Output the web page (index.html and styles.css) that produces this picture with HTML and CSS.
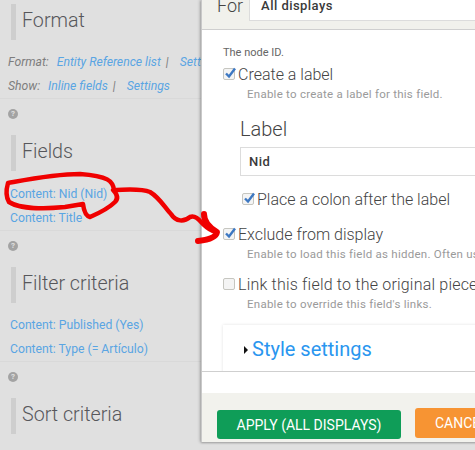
FILE: index.html
```html
<!DOCTYPE html>
<html lang="en">
<head>
<meta charset="utf-8">
<title>Field settings</title>
<link rel="stylesheet" href="styles.css">
</head>
<body>
<main class="sidebar">
  <section class="block first">
    <h2 class="title">Format</h2>
    <p class="meta"><em>Format:</em><a>Entity Reference list</a><em class="sep">|</em><a>Settings</a></p>
    <p class="meta"><em>Show:</em><a>Inline fields</a><em class="sep">|</em><a>Settings</a></p>
  </section>
  <section class="block">
    <span class="help">?</span>
    <h2 class="title">Fields</h2>
    <p class="item"><a>Content: Nid (Nid)</a></p>
    <p class="item"><a>Content: Title</a></p>
  </section>
  <section class="block">
    <span class="help">?</span>
    <h2 class="title">Filter criteria</h2>
    <p class="item"><a>Content: Published (Yes)</a></p>
    <p class="item"><a>Content: Type (= Artículo)</a></p>
  </section>
  <section class="block">
    <span class="help">?</span>
    <h2 class="title">Sort criteria</h2>
  </section>
</main>

<aside class="modal">
  <header class="modal-head">
    <span class="for">For</span>
    <div class="select">All displays</div>
  </header>
  <div class="modal-body">
    <p class="desc">The node ID.</p>
    <label class="check create"><span class="box on"><svg viewBox="0 0 12 12"><path d="M2 6.5 5 9.5 11 1.5" /></svg></span>Create a label</label>
    <p class="hint">Enable to create a label for this field.</p>
    <div class="nested">
      <h3 class="label-head">Label</h3>
      <div class="input">Nid</div>
      <label class="check"><span class="box on"><svg viewBox="0 0 12 12"><path d="M2 6.5 5 9.5 11 1.5" /></svg></span>Place a colon after the label</label>
    </div>
    <label class="check exclude"><span class="box on"><svg viewBox="0 0 12 12"><path d="M2 6.5 5 9.5 11 1.5" /></svg></span>Exclude from display</label>
    <p class="hint">Enable to load this field as hidden. Often used to group fields.</p>
    <label class="check link"><span class="box"></span>Link this field to the original piece of content</label>
    <p class="hint">Enable to override this field's links.</p>
    <div class="fieldset"><span class="tri"></span><span class="legend">Style settings</span></div>
  </div>
  <footer class="modal-foot">
    <button class="btn apply">APPLY (ALL DISPLAYS)</button>
    <button class="btn cancel">CANCEL</button>
  </footer>
</aside>

<svg class="scribble" viewBox="0 0 475 450" width="475" height="450">
  <path class="s4" d="M114 190C113 181 108 176 80 174C55 174 30 179 8 183C6 190 6 197 9 202C20 209 45 209 65 207L83 204C84 212 86 216 90 217C97 214 108 209 115 202C119 198 117 194 113 190C125 190 140 188 150 192C160 198 165 208 171 214C176 222 184 222 190 217C196 215 200 221 204 225C208 229 212 231 216 232" />
  <path class="s6" d="M204 214C204 222 210 228 217 232C216 238 208 240 198 241" />
</svg>
</body>
</html>
```
FILE: styles.css
```css
* { box-sizing: border-box; }
html, body { margin: 0; padding: 0; }
body {
  width: 475px;
  height: 450px;
  overflow: hidden;
  position: relative;
  background: #e0e0e0;
  font-family: Roboto, "Liberation Sans", sans-serif;
  color: #5f5f5f;
}
p, h2, h3 { margin: 0; }
a { color: #5aa5e3; }

.sidebar { width: 201px; height: 450px; overflow: hidden; }
.block {
  height: 131.5px;
  padding-top: 7px;
  border-bottom: 1px solid #d9d9d9;
  white-space: nowrap;
}
.block.first { height: 99px; padding-top: 4px; }
.block:last-child { border-bottom: 0; }

.help {
  display: block;
  width: 10px;
  height: 10px;
  margin: 3px 0 16px 8px;
  border-radius: 50%;
  background: #a3a3a3;
  color: #e0e0e0;
  font-size: 8px;
  font-weight: 700;
  line-height: 10px;
  text-align: center;
}

.title {
  margin-left: 11px;
  height: 36px;
  padding-left: 6px;
  border-left: 5px solid #cecece;
  font-size: 19.7px;
  font-weight: 300;
  line-height: 34px;
  color: #57575b;
}
.meta {
  margin: 0 0 0 8px;
  font-size: 12.2px;
  line-height: 24px;
  color: #7d7d7d;
}
.meta:first-of-type { margin-top: 10px; }
.meta em { font-style: italic; }
.meta a { font-style: italic; margin-left: 8px; }
.meta .sep { margin-left: 5px; margin-right: 3px; }
.item { margin-left: 10px; font-size: 12.2px; line-height: 24px; }
.title + .item { margin-top: 10.5px; }

.modal {
  position: absolute;
  top: 0;
  left: 201px;
  width: 290px;
  height: 442px;
  background: #fff;
  border-left: 1px solid #c9c9c9;
  box-shadow: -1px 0 3px rgba(0, 0, 0, .25), 0 1px 2px rgba(0, 0, 0, .2);
  display: flex;
  flex-direction: column;
}
.modal-head {
  height: 30px;
  flex: none;
  display: flex;
  gap: 6px;
  padding-left: 15px;
  background: #f1f1ec;
  border-bottom: 1px solid #cfcfcf;
  overflow: hidden;
}
.for { font-size: 18px; font-weight: 300; line-height: 12px; color: #444; }
.select {
  width: 260px;
  height: 21px;
  background: #fff;
  border: 1px solid #dcdcdc;
  border-top: 0;
  padding-left: 11px;
  font-size: 13px;
  font-weight: 500;
  line-height: 12px;
  letter-spacing: .45px;
  color: #3a3a3a;
}
.modal-body {
  flex: 1;
  min-height: 0;
  padding: 16px 0 0 21px;
  border-bottom: 1px solid #cfcfcf;
  overflow: hidden;
  margin-bottom: 21px;
  white-space: nowrap;
}
.desc { font-size: 11px; line-height: 14px; color: #666; }
.check {
  display: flex;
  align-items: flex-start;
  gap: 3px;
  height: 20px;
  font-size: 16px;
  font-weight: 300;
  line-height: 20px;
  color: #444;
}
.box {
  flex: none;
  width: 12px;
  height: 12px;
  margin-top: 3px;
  background: #f4f4f4;
  border: 1px solid #c6c6c0;
  border-radius: 2px;
  position: relative;
}
.box svg { position: absolute; left: 0; top: -2px; width: 12px; height: 12px; fill: none; stroke: #3d78c2; stroke-width: 2.4; }
.hint { margin: 2px 0 0 24px; font-size: 11.5px; line-height: 14px; letter-spacing: .25px; color: #9a9a9a; }
.create { margin-top: 5px; }
.nested { padding-left: 17px; }
.label-head { margin-top: 15px; font-size: 20px; font-weight: 300; line-height: 26px; color: #444; }
.input {
  width: 240px;
  height: 29px;
  margin-top: 5px;
  padding-left: 8px;
  background: #fff;
  border: 1px solid #dcdcdc;
  font-size: 13px;
  font-weight: 500;
  line-height: 27px;
  letter-spacing: .45px;
  color: #3a3a3a;
}
.nested .check { margin: 14px 0 0 2px; }
.exclude { margin-top: 15px; }
.link { margin-top: 14px; letter-spacing: .2px; }
.fieldset {
  margin-top: 14px;
  height: 60px;
  padding: 12px 0 0 21px;
  display: flex;
  align-items: flex-start;
  box-shadow: 0 0 3px rgba(0, 0, 0, .12);
}
.tri {
  width: 0;
  height: 0;
  margin-top: 9px;
  border-left: 4px solid #111;
  border-top: 4px solid transparent;
  border-bottom: 4px solid transparent;
  margin-right: 4px;
}
.legend { font-size: 20px; line-height: 24px; color: #2a96ef; }
.modal-foot {
  height: 49px;
  flex: none;
  display: flex;
  gap: 14px;
  padding: 17px 0 0 15px;
  background: #f2f2ed;
  align-items: flex-start;
}
.btn {
  flex: none;
  height: 29px;
  border: 0;
  border-radius: 3px;
  color: #fff;
  font-family: Roboto, "Liberation Sans", sans-serif;
  font-size: 14px;
  font-weight: 400;
  padding: 0;
}
.apply { width: 184px; background: #0f9d58; }
.cancel { width: 120px; height: 30px; margin-top: -2px; background: #f79433; text-align: left; padding-left: 20px; }

.scribble { position: absolute; top: 0; left: 0; fill: none; stroke: #f00000; stroke-linecap: round; stroke-linejoin: round; }
.s4 { stroke-width: 4.5; }
.s6 { stroke-width: 6; }
```
